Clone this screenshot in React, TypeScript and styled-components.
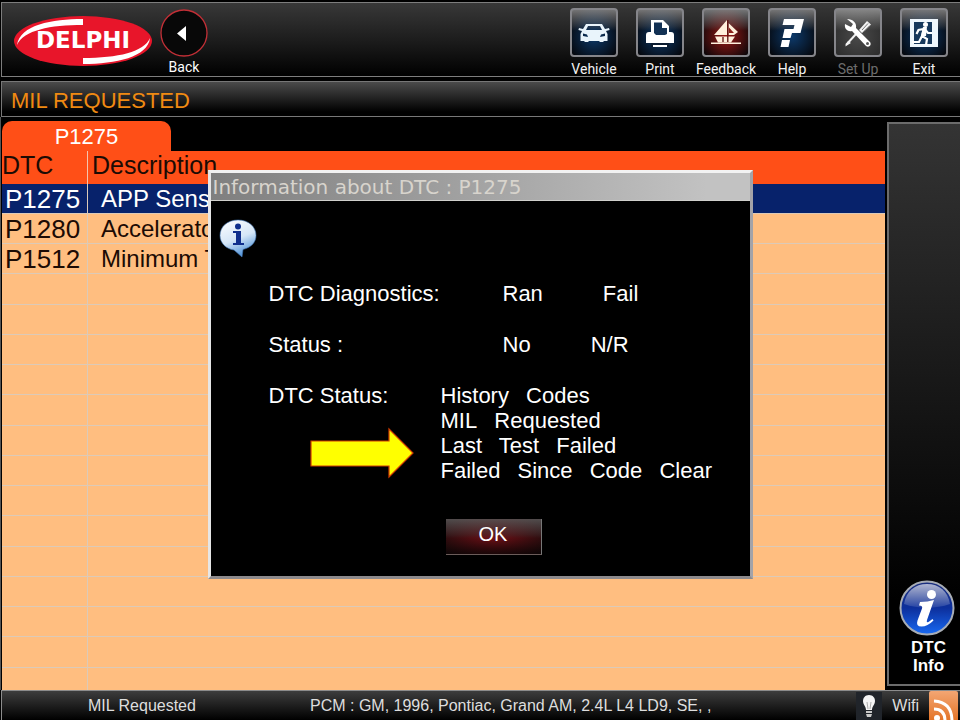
import React from "react";
import styled, { createGlobalStyle, css } from "styled-components";

const GlobalStyle = createGlobalStyle`
  *, *::before, *::after { box-sizing: border-box; }
  body { margin: 0; background: #000; }
  button { font: inherit; color: inherit; border: 0; padding: 0; background: none; cursor: pointer; }
`;

const sans = `"Liberation Sans", Arial, sans-serif`;
const narrow = `Roboto, "Liberation Sans", sans-serif`;

const Page = styled.div`
  position: relative;
  display: flex;
  flex-direction: column;
  height: 100vh;
  overflow: hidden;
  background: #000;
  color: #fff;
  font-family: ${sans};
`;

const Toolbar = styled.header`
  display: flex;
  justify-content: space-between;
  flex: none;
  height: 75px;
  margin: 2px 0 4px 1px;
  padding: 0 3px 0 12px;
  border: 1px solid #7d7d7d;
  border-right: 0;
  background: linear-gradient(#383838, #1d1d1d 50%, #000);
`;

const ToolGroup = styled.div`
  display: flex;
  align-items: flex-start;
`;

const Logo = styled.svg`
  width: 140px;
  height: 52px;
  margin-top: 11px;
`;

const BackButton = styled.button`
  display: flex;
  flex-direction: column;
  align-items: center;
  width: 60px;
  margin-top: 6px;
  font: 14px/16px ${narrow};
  svg { margin-bottom: 2px; }
`;

const ToolButton = styled.button`
  display: flex;
  flex-direction: column;
  align-items: center;
  gap: 4px;
  width: 66px;
  margin-top: 5px;
  font: 14px/16px ${narrow};
  color: #f2f2f2;
  &:disabled { color: #6d6d6d; cursor: default; }
`;

type Tone = "blue" | "red" | "gray";
const glow: Record<Tone, string> = {
  blue: "#0d3a6b",
  red: "#9c1a16",
  gray: "#4a4a4a",
};

const IconTile = styled.span<{ $tone: Tone }>`
  display: flex;
  align-items: center;
  justify-content: center;
  width: 48px;
  height: 49px;
  border: 2px solid #85858a;
  border-radius: 4px;
  background:
    linear-gradient(rgba(190, 190, 190, 0.6), rgba(120, 120, 120, 0.25) 36%, transparent 46%),
    radial-gradient(circle at 50% 58%, ${(p) => glow[p.$tone]}, ${(p) => (p.$tone === "gray" ? "#2c2c2c" : "#050508")} 85%);
`;

const TitleBar = styled.h1`
  flex: none;
  height: 36px;
  margin: 0 0 0 1px;
  padding: 0 0 0 9px;
  border: 1px solid #777;
  border-right: 0;
  background: linear-gradient(#4b4b4b, #000 88%);
  color: #f08a12;
  font-size: 22px;
  font-weight: 400;
  line-height: 37px;
`;

const Main = styled.main`
  display: flex;
  flex: 1;
  gap: 2px;
  min-height: 0;
`;

const Panel = styled.section`
  display: flex;
  flex-direction: column;
  flex: 1;
  min-width: 0;
  padding-top: 4px;
  border-left: 1px solid #555;
  padding-left: 1px;
`;

const Tab = styled.button`
  flex: none;
  width: 169px;
  height: 30px;
  border-radius: 10px 10px 0 0;
  background: #ff4f17;
  font-size: 22px;
  line-height: 32px;
`;

const TableClip = styled.div`
  flex: 1;
  min-height: 0;
  overflow: hidden;
  background: #ffbe80;
`;

const CodeTable = styled.table`
  width: 100%;
  table-layout: fixed;
  border-spacing: 0;
  color: #1c0b04;
  font-size: 25px;
`;

const HeadCell = styled.th<{ $first?: boolean }>`
  width: ${(p) => (p.$first ? "86px" : "auto")};
  height: 33px;
  padding: 0 0 5px ${(p) => (p.$first ? "0" : "4px")};
  border-right: ${(p) => (p.$first ? "1px solid #f5c4ae" : "0")};
  background: #ff4f17;
  font-weight: 400;
  line-height: 28px;
  text-align: left;
`;

const Row = styled.tr<{ $selected?: boolean }>`
  height: 30px;
  &:nth-child(4n) { height: 31px; }
  ${(p) =>
    p.$selected &&
    css`
      background: #07226b;
      color: #fff;
    `}
`;

const Cell = styled.td<{ $first?: boolean }>`
  padding: 0 0 0 ${(p) => (p.$first ? "3px" : "13px")};
  border-bottom: 1px solid #dccab8;
  border-right: ${(p) => (p.$first ? "1px solid #dccab8" : "0")};
  overflow: hidden;
  font-size: ${(p) => (p.$first ? "26px" : "24px")};
  line-height: 28px;
  white-space: nowrap;
`;

const Sidebar = styled.aside`
  display: flex;
  flex-direction: column;
  justify-content: flex-end;
  width: 73px;
  margin: 5px 0 4px;
  padding: 0 0 9px 4px;
  border: 2px solid #6c6c6c;
  border-right: 0;
  background: linear-gradient(#343434, #000 85%);
`;

const InfoButton = styled.button`
  display: flex;
  flex-direction: column;
  align-items: center;
  font-size: 17px;
  font-weight: 700;
  line-height: 18px;
  svg { margin-bottom: 3px; }
`;

const InfoText = styled.span`
  padding-left: 4px;
`;

const StatusBar = styled.footer`
  display: flex;
  align-items: center;
  flex: none;
  height: 30px;
  margin-left: 1px;
  padding-right: 2px;
  border-top: 1px solid #8c8c8c;
  border-left: 1px solid #8c8c8c;
  background: linear-gradient(#3d3d3d, #000);
  color: #dedede;
  font-size: 16px;
  white-space: nowrap;
`;

const StatusName = styled.span`
  width: 222px;
  margin-left: 86px;
`;

const StatusVehicle = styled.span`
  flex: 1;
`;

const BulbBox = styled.span`
  display: flex;
  align-items: center;
  justify-content: center;
  width: 26px;
  height: 28px;
  background: #20242a;
`;

const Wifi = styled.span`
  margin: 0 10px;
`;

const Overlay = styled.div`
  position: absolute;
  inset: 0;
  display: flex;
  align-items: center;
  justify-content: center;
  padding-top: 28px;
`;

const Dialog = styled.div`
  width: 545px;
  border: 3px solid;
  border-color: #f2f2f2 #a3a3a8 #8d8a8c #e6e6e6;
  background: #000;
`;

const DialogTitle = styled.h2`
  height: 28px;
  margin: 0;
  padding-left: 2px;
  border-bottom: 1px solid #d0d0cc;
  background: linear-gradient(90deg, #7f7f7f, #c2c2c2 92%);
  color: #d8d4cd;
  font: 400 20px/28px "DejaVu Sans", sans-serif;
`;

const DialogBody = styled.div`
  padding: 18px 8px 21px;
  font-size: 22px;
  line-height: 25px;
`;

const Bubble = styled.svg`
  display: block;
`;

const Facts = styled.dl`
  display: flex;
  flex-direction: column;
  gap: 26px;
  margin: 23px 0 36px 50px;
`;

const Fact = styled.div`
  display: flex;
  gap: 60px;
`;

const Label = styled.dt<{ $short?: boolean }>`
  width: ${(p) => (p.$short ? "112px" : "174px")};
  white-space: nowrap;
  svg { display: block; margin: 19px 0 0 41px; }
`;

const Value = styled.dd`
  margin: 0;
  white-space: pre;
`;

const OkButton = styled.button`
  display: block;
  width: 96px;
  height: 36px;
  margin-left: 227px;
  padding-bottom: 4px;
  border-right: 1px solid #777;
  border-bottom: 1px solid #6b5c5a;
  background:
    linear-gradient(rgba(110, 110, 110, 0.65), rgba(70, 60, 60, 0.3) 45%, transparent 55%, rgba(0, 0, 0, 0.55)),
    radial-gradient(ellipse at 50% 55%, #6d0f15, #1d0c0d 90%);
  font-size: 20px;
`;

const DelphiLogo = () => (
  <Logo viewBox="0 0 140 52" role="img" aria-label="Delphi">
    <ellipse cx="69" cy="27" rx="69" ry="25" fill="#e8152a" />
    <path d="M69 5 C38 5 6 11 3 31 C10 16 36 11 69 11z" fill="#fff" />
    <path d="M69 50 C102 50 134 43 136 24 C130 38 104 44 69 44z" fill="#fff" />
    <text x="69" y="34" textAnchor="middle" fill="#fff" fontFamily="DejaVu Sans" fontWeight="700" fontSize="23">DELPHI</text>
  </Logo>
);

const BackIcon = () => (
  <svg width="48" height="48" viewBox="0 0 48 48">
    <circle cx="24" cy="24" r="23" fill="#080808" stroke="#c22f36" strokeWidth="1.3" />
    <path d="M17 24.500 L26 17v15z" fill="#fff" />
  </svg>
);

const CarIcon = () => (
  <svg width="34" height="24" viewBox="0 0 34 24" fill="#e9f4fb">
    <path fillRule="evenodd" d="M9 3h16l3 5 4-1 .6 2-3.600 1 1.500 3v7h-4v1h-4v-1H11.500v1h-4v-1h-4v-7L5 10 1.400 9 2 7l4 1zM11 5 9 9h16l-2-4zM6 12.500v2.500l5 1-1-2.500zM28 12.500l-4 1-1 2.500 5-1z" />
  </svg>
);

const PrintIcon = () => (
  <svg width="30" height="30" viewBox="0 0 30 30">
    <path d="M6 14V2h12l6 6v6h2q3 0 3 3v8H1v-8q0-3 3-3z" fill="#fff" />
    <path d="M9 15V4.500h8V10h5v6l-2 1H11z" fill="#123154" />
    <path d="M18 4v5h4z" fill="#fff" />
    <path d="M6 25h18v4H6z" fill="#0a1b30" />
    <path d="M8 27h14v2H8z" fill="#fff" />
  </svg>
);

const BoatIcon = () => (
  <svg width="34" height="26" viewBox="0 0 34 26" fill="#fff0dc">
    <path d="M18 0v15H5zM19.500 3 29 12l-4 3h-5.500zM6 16.500h20l-4 6H9z" />
    <path d="M2 22.500h30v1.500H2z" />
    <path d="M18.800 0v22M14 17v5" stroke="#5c100e" strokeWidth="1.300" />
    <path d="M20 7.500 25 13h-5z" fill="#8c2019" />
  </svg>
);

const HelpIcon = () => (
  <svg width="30" height="32" viewBox="0 0 30 32" fill="#fff">
    <path d="M7 2h20l-3.500 14H15l-1.500 5H5.500l2-9h9l1-4H5.500zM5 23h8l-1.500 7H3.500z" />
  </svg>
);

const ToolsIcon = () => (
  <svg width="32" height="32" viewBox="0 0 32 32">
    <path d="M4 28 14 17" stroke="#f2f2f2" strokeWidth="2" />
    <path d="M3 29.500 6 24l3 2zM17 13l8-9 4 3.500-9 8.500z" fill="#f2f2f2" />
    <path d="m20 13 6-6.500m-4 8 6-6" stroke="#777" strokeWidth="1" />
    <path d="M5 2 11 7l-2 3-6-3c-1 5 3 8 7 7l14 15c3 2 6-1 4-4L14 11c1-5-3-9-9-9z" fill="#fff" />
    <circle cx="25.500" cy="26.500" r="1.500" fill="#555" />
  </svg>
);

const ExitIcon = () => (
  <svg width="32" height="32" viewBox="0 0 32 32">
    <path d="M2 2h28v28H2z" fill="#eef6fc" />
    <path d="M6 5h18v22H6z" fill="#16385c" />
    <circle cx="17.500" cy="7.500" r="2.500" fill="#fff" />
    <path d="m16 11-2 8 5 3-1 6M14 19l-3 6H4M15.500 12l-5 1-2 4M17.500 13l2.500 3h4" fill="none" stroke="#fff" strokeWidth="2.200" />
    <path d="M15 10h4l-1 9h-5z" fill="#fff" />
  </svg>
);

const BubbleIcon = () => (
  <Bubble width="38" height="39" viewBox="0 0 38 39">
    <defs>
      <linearGradient id="bubble" x1="0" y1="0" x2="0.400" y2="1">
        <stop offset="0" stopColor="#fff" />
        <stop offset="0.600" stopColor="#d5e6f7" />
        <stop offset="1" stopColor="#5d9bdb" />
      </linearGradient>
    </defs>
    <path d="M19 1C8 1 1 8 1 16.500 1 24 7 30 15 31l8 7 1-7.500c8-2 13-7 13-14C37 8 30 1 19 1z" fill="url(#bubble)" stroke="#3f76b5" strokeWidth="0.600" />
    <circle cx="19" cy="7.500" r="3" fill="#102f8c" />
    <path d="M14 12h8v12h3v2H14v-2h3V14h-3z" fill="#102f8c" />
  </Bubble>
);

const InfoIcon = () => (
  <svg width="56" height="56" viewBox="0 0 56 56">
    <defs>
      <linearGradient id="disc" x1="0" y1="0" x2="0" y2="1">
        <stop offset="0" stopColor="#1c2f7d" />
        <stop offset="0.500" stopColor="#0d2f9c" />
        <stop offset="1" stopColor="#1869f2" />
      </linearGradient>
      <linearGradient id="shine" x1="0" y1="0" x2="0" y2="1">
        <stop offset="0" stopColor="#fff" stopOpacity="0.650" />
        <stop offset="1" stopColor="#fff" stopOpacity="0.100" />
      </linearGradient>
    </defs>
    <circle cx="28" cy="28" r="26.500" fill="url(#disc)" stroke="#a8adb5" strokeWidth="2" />
    <path d="M5 24C7 11 16 4 28 4s21 7 23 20c-14 5-32 5-46 0z" fill="url(#shine)" />
    <circle cx="32.500" cy="14.500" r="4.500" fill="#fff" />
    <path d="M21 22q8 0 14-2l-7 20q-1 3 1.500 2l4-3 1 1.500q-6 6-12 6-6 0-4-6l4.500-12q1-3-3-3z" fill="#fff" />
  </svg>
);

const BulbIcon = () => (
  <svg width="14" height="24" viewBox="0 0 14 24">
    <path d="M7 1C3 1 1 4 1 7c0 4 3 5 3 9h6c0-4 3-5 3-9 0-3-2-6-6-6z" fill="#f4f4f4" />
    <path d="M4 17h6v2H4zM4 20h6l-1 3H5z" fill="#c9c9c9" />
    <path d="m5 8 1 7m3-7-1 7" stroke="#999" strokeWidth="0.800" />
  </svg>
);

const FeedIcon = () => (
  <svg width="29" height="29" viewBox="0 0 29 29">
    <defs>
      <linearGradient id="feed" x1="0" y1="0" x2="0" y2="1">
        <stop offset="0" stopColor="#f3a673" />
        <stop offset="1" stopColor="#e26f20" />
      </linearGradient>
    </defs>
    <rect width="29" height="32" rx="2" fill="url(#feed)" />
    <circle cx="8" cy="27" r="3" fill="#fff" />
    <path d="M5 18q11 0 11 12M5 10q18 1 18 20" fill="none" stroke="#fff" strokeWidth="3" />
  </svg>
);

const ArrowIcon = () => (
  <svg width="105" height="52" viewBox="0 0 105 52">
    <path d="M1 14h78V2l24 24-24 24V39H1z" fill="#ff0" stroke="#d23c00" strokeWidth="1.200" />
  </svg>
);

const tools: { label: string; tone: Tone; icon: React.ReactNode; disabled?: boolean }[] = [
  { label: "Vehicle", tone: "blue", icon: <CarIcon /> },
  { label: "Print", tone: "blue", icon: <PrintIcon /> },
  { label: "Feedback", tone: "red", icon: <BoatIcon /> },
  { label: "Help", tone: "blue", icon: <HelpIcon /> },
  { label: "Set Up", tone: "gray", icon: <ToolsIcon />, disabled: true },
  { label: "Exit", tone: "blue", icon: <ExitIcon /> },
];

const codes = [
  { code: "P1275", text: "APP Sensor" },
  { code: "P1280", text: "Accelerator" },
  { code: "P1512", text: "Minimum T" },
];

const emptyRows = Array.from({ length: 14 }, (_, i) => i);

export default function App() {
  return (
    <Page>
      <GlobalStyle />
      <Toolbar>
        <ToolGroup>
          <DelphiLogo />
          <BackButton type="button">
            <BackIcon />
            Back
          </BackButton>
        </ToolGroup>
        <ToolGroup>
          {tools.map((t) => (
            <ToolButton key={t.label} type="button" disabled={t.disabled}>
              <IconTile $tone={t.tone}>{t.icon}</IconTile>
              {t.label}
            </ToolButton>
          ))}
        </ToolGroup>
      </Toolbar>
      <TitleBar>MIL REQUESTED</TitleBar>
      <Main>
        <Panel>
          <Tab type="button">P1275</Tab>
          <TableClip>
            <CodeTable>
              <thead>
                <tr>
                  <HeadCell $first>DTC</HeadCell>
                  <HeadCell>Description</HeadCell>
                </tr>
              </thead>
              <tbody>
                {codes.map((c, i) => (
                  <Row key={c.code} $selected={i === 0}>
                    <Cell $first>{c.code}</Cell>
                    <Cell>{c.text}</Cell>
                  </Row>
                ))}
                {emptyRows.map((i) => (
                  <Row key={i}>
                    <Cell $first />
                    <Cell />
                  </Row>
                ))}
              </tbody>
            </CodeTable>
          </TableClip>
        </Panel>
        <Sidebar>
          <InfoButton type="button">
            <InfoIcon />
            <InfoText>DTC</InfoText>
            <InfoText>Info</InfoText>
          </InfoButton>
        </Sidebar>
      </Main>
      <StatusBar>
        <StatusName>MIL Requested</StatusName>
        <StatusVehicle>PCM : GM, 1996, Pontiac, Grand AM, 2.4L L4 LD9, SE, ,</StatusVehicle>
        <BulbBox>
          <BulbIcon />
        </BulbBox>
        <Wifi>Wifi</Wifi>
        <FeedIcon />
      </StatusBar>
      <Overlay>
        <Dialog role="dialog" aria-labelledby="dialog-title">
          <DialogTitle id="dialog-title">Information about DTC : P1275</DialogTitle>
          <DialogBody>
            <BubbleIcon />
            <Facts>
              <Fact>
                <Label>DTC Diagnostics:</Label>
                <Value>Ran</Value>
                <Value>Fail</Value>
              </Fact>
              <Fact>
                <Label>Status :</Label>
                <Value>No</Value>
                <Value>N/R</Value>
              </Fact>
              <Fact>
                <Label $short>
                  DTC Status:
                  <ArrowIcon />
                </Label>
                <Value>
                  {"History\u2002 Codes\nMIL\u2002 Requested\nLast\u2002 Test\u2002 Failed\nFailed\u2002 Since\u2002 Code\u2002 Clear"}
                </Value>
              </Fact>
            </Facts>
            <OkButton type="button">OK</OkButton>
          </DialogBody>
        </Dialog>
      </Overlay>
    </Page>
  );
}
